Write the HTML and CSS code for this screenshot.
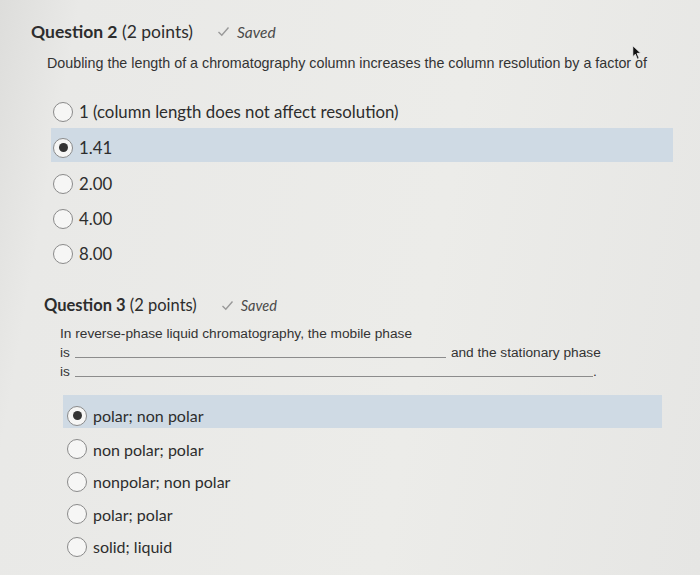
FILE: index.html
```html
<!DOCTYPE html>
<html lang="en">

<head>
    <meta charset="UTF-8">
    <title>Quiz</title>
    <link rel="stylesheet" href="styles.css">
</head>

<body>
    <div class="page">
        <div class="question q2">
            <div class="q-head">
                <span class="q-title"><b>Question 2</b> (2 points)</span>
                <span class="saved">
                    <svg width="13" height="11" viewBox="0 0 13 11"><path d="M1.5 6 L4.8 9.2 L11.5 1.5" fill="none" stroke="#999" stroke-width="1.4"/></svg>
                    Saved
                </span>
            </div>
            <p class="q-text">Doubling the length of a chromatography column increases the column resolution by a factor of</p>
            <div class="options">
                <div class="option"><span class="radio"></span>1 (column length does not affect resolution)</div>
                <div class="option selected"><span class="radio"></span>1.41</div>
                <div class="option"><span class="radio"></span>2.00</div>
                <div class="option"><span class="radio"></span>4.00</div>
                <div class="option"><span class="radio"></span>8.00</div>
            </div>
        </div>

        <div class="question q3">
            <div class="q-head">
                <span class="q-title"><b>Question 3</b> (2 points)</span>
                <span class="saved">
                    <svg width="13" height="11" viewBox="0 0 13 11"><path d="M1.5 6 L4.8 9.2 L11.5 1.5" fill="none" stroke="#999" stroke-width="1.4"/></svg>
                    Saved
                </span>
            </div>
            <div class="q-text">
                <div>In reverse-phase liquid chromatography, the mobile phase</div>
                <div class="blank-line">is <span class="blank short"></span> and the stationary phase</div>
                <div class="blank-line">is <span class="blank long"></span>.</div>
            </div>
            <div class="options">
                <div class="option selected"><span class="radio"></span>polar; non polar</div>
                <div class="option"><span class="radio"></span>non polar; polar</div>
                <div class="option"><span class="radio"></span>nonpolar; non polar</div>
                <div class="option"><span class="radio"></span>polar; polar</div>
                <div class="option"><span class="radio"></span>solid; liquid</div>
            </div>
        </div>
    </div>

    <svg class="cursor" width="10" height="15" viewBox="0 0 12 18"><path d="M1 1 L1 14 L4 11 L6.5 17 L8.5 16 L6 10 L10.5 10 Z" fill="#111" stroke="#fff" stroke-width="0.8"/></svg>
</body>

</html>
```

FILE: styles.css
```css
body {
    margin: 0;
    width: 700px;
    height: 575px;
    overflow: hidden;
    background: linear-gradient(100deg, #dddddb 0%, #e9e9e7 10%, #ecece9 60%, #e6e6e4 100%);
    font-family: Lato, "Open Sans", sans-serif;
    color: #2d2d2d;
    position: relative;
}

.page {
    padding: 21px 0 0 31px;
}

.q-head {
    display: flex;
    align-items: center;
    gap: 24px;
}

.q-title {
    font-size: 17.5px;
}

.q-title b {
    font-weight: 700;
}

.saved {
    display: flex;
    align-items: center;
    gap: 7px;
    font-style: italic;
    font-size: 15.5px;
    color: #4a4a4a;
}

.q-text {
    font-family: "Liberation Sans", Arial, sans-serif;
    color: #333;
}

.q2 .q-text {
    font-size: 14.3px;
    margin: 13px 0 0 16px;
}

.options {
    display: flex;
    flex-direction: column;
}

.option {
    display: flex;
    align-items: center;
    gap: 6px;
    padding-left: 2px;
    box-sizing: border-box;
}

.radio {
    width: 18px;
    height: 18px;
    border: 1px solid #8a8a8a;
    border-radius: 50%;
    background: #f6f6f5;
    flex-shrink: 0;
    position: relative;
}

.selected {
    background-color: #cfdae4;
}

.selected .radio::after {
    content: "";
    position: absolute;
    left: 4.5px;
    top: 4.5px;
    width: 9px;
    height: 9px;
    border-radius: 50%;
    background: #333;
}

.q2 .options {
    margin: 23px 27px 0 20px;
}

.q2 .option {
    height: 35px;
    font-size: 16.8px;
}

.q2 .option.selected {
    height: 34px;
    margin: -1.5px 0 4.5px;
    padding-top: 6px;
}

.q3 {
    margin: 24px 0 0 13px;
}

.q3 .q-title {
    font-size: 16.5px;
}

.q3 .saved {
    font-size: 14.5px;
}

.q3 .q-text {
    font-size: 13.7px;
    margin: 9px 0 0 16px;
    line-height: 19px;
}

.blank-line {
    display: flex;
    align-items: flex-end;
}

.blank {
    display: inline-block;
    border-bottom: 1px solid #8c8c8c;
    margin: 0 5px 4px 5px;
}

.blank.short {
    width: 371px;
}

.blank.long {
    width: 518px;
    margin-right: 0;
}

.q3 .options {
    margin: 14px 38px 0 19px;
}

.q3 .option {
    height: 32.5px;
    font-size: 16px;
    padding-left: 4px;
}

.q3 .option.selected {
    height: 33px;
    padding-top: 8px;
    margin-bottom: 5px;
}

.cursor {
    position: absolute;
    left: 632px;
    top: 45px;
}
```
